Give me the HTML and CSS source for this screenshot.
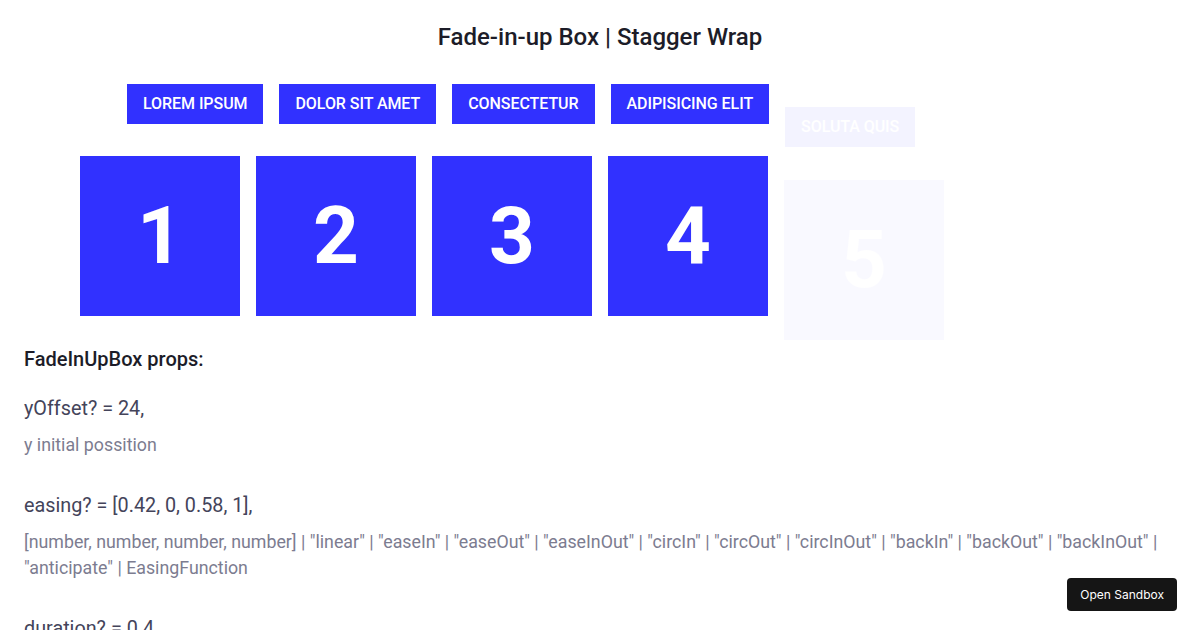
FILE: index.html
```html
<!DOCTYPE html>
<html lang="en">
<head>
<meta charset="utf-8">
<title>Fade-in-up Box | Stagger Wrap</title>
<link rel="stylesheet" href="styles.css">
</head>
<body>
<main class="page">
  <h1 class="title">Fade-in-up Box | Stagger Wrap</h1>
  <div class="tags">
    <span class="tag">Lorem ipsum</span>
    <span class="tag">Dolor sit amet</span>
    <span class="tag">Consectetur</span>
    <span class="tag">Adipisicing elit</span>
    <span class="tag tag-fading">Soluta quis</span>
  </div>
  <div class="boxes">
    <div class="box">1</div>
    <div class="box">2</div>
    <div class="box">3</div>
    <div class="box">4</div>
    <div class="box box-fading">5</div>
  </div>
  <section class="props">
    <h2 class="props-title">FadeInUpBox props:</h2>
    <div class="prop">
      <p class="prop-name">yOffset? = 24,</p>
      <p class="prop-desc">y initial possition</p>
    </div>
    <div class="prop">
      <p class="prop-name">easing? = [0.42, 0, 0.58, 1],</p>
      <p class="prop-desc">[number, number, number, number] | "linear" | "easeIn" | "easeOut" | "easeInOut" | "circIn" | "circOut" | "circInOut" | "backIn" | "backOut" | "backInOut" | "anticipate" | EasingFunction</p>
    </div>
    <div class="prop">
      <p class="prop-name">duration? = 0.4,</p>
      <p class="prop-desc">animation duration in seconds</p>
    </div>
  </section>
</main>
<a class="sandbox-btn" href="#">Open Sandbox</a>
</body>
</html>
```

FILE: styles.css
```css
html, body {
  margin: 0;
  padding: 0;
  background: #ffffff;
}
body {
  font-family: Roboto, "Noto Sans", sans-serif;
  color: #1c1c28;
  overflow: hidden;
}
.page {
  padding: 21px 24px 0;
}
.title {
  margin: 0;
  text-align: center;
  font-size: 24px;
  line-height: 32px;
  font-weight: 500;
  color: #1c1c28;
}
.tags {
  display: flex;
  gap: 16px;
  margin-top: 31px;
  padding-left: 103px;
}
.tag {
  display: block;
  background: #3131ff;
  color: #ffffff;
  text-transform: uppercase;
  font-size: 16px;
  font-weight: 500;
  line-height: 24px;
  padding: 8px 16px;
  letter-spacing: -0.06px;
}
.tag-fading {
  opacity: 0.05;
  transform: translateY(23px);
}
.boxes {
  display: flex;
  gap: 16px;
  margin-top: 32px;
  padding-left: 56px;
}
.box {
  width: 160px;
  height: 160px;
  flex: none;
  background: #3131ff;
  color: #ffffff;
  display: flex;
  align-items: center;
  justify-content: center;
  font-size: 80px;
  font-weight: 700;
}
.box-fading {
  opacity: 0.025;
  transform: translateY(24px);
}
.props {
  margin-top: 29px;
}
.props-title {
  margin: 0 0 22px;
  font-size: 20px;
  line-height: 28px;
  font-weight: 500;
  color: #1c1c28;
}
.prop {
  margin-bottom: 34px;
}
.prop-name {
  margin: 0 0 9px;
  font-size: 19.8px;
  line-height: 28px;
  color: #44445a;
}
.prop-desc {
  margin: 0;
  font-size: 17.8px;
  line-height: 26px;
  color: #7c7c90;
}
.sandbox-btn {
  position: fixed;
  right: 23px;
  bottom: 19px;
  height: 33px;
  padding: 0 13px;
  display: flex;
  align-items: center;
  background: #151515;
  color: #ffffff;
  border-radius: 4px;
  font-family: Inter, "Liberation Sans", sans-serif;
  font-size: 12px;
  text-decoration: none;
}
```
